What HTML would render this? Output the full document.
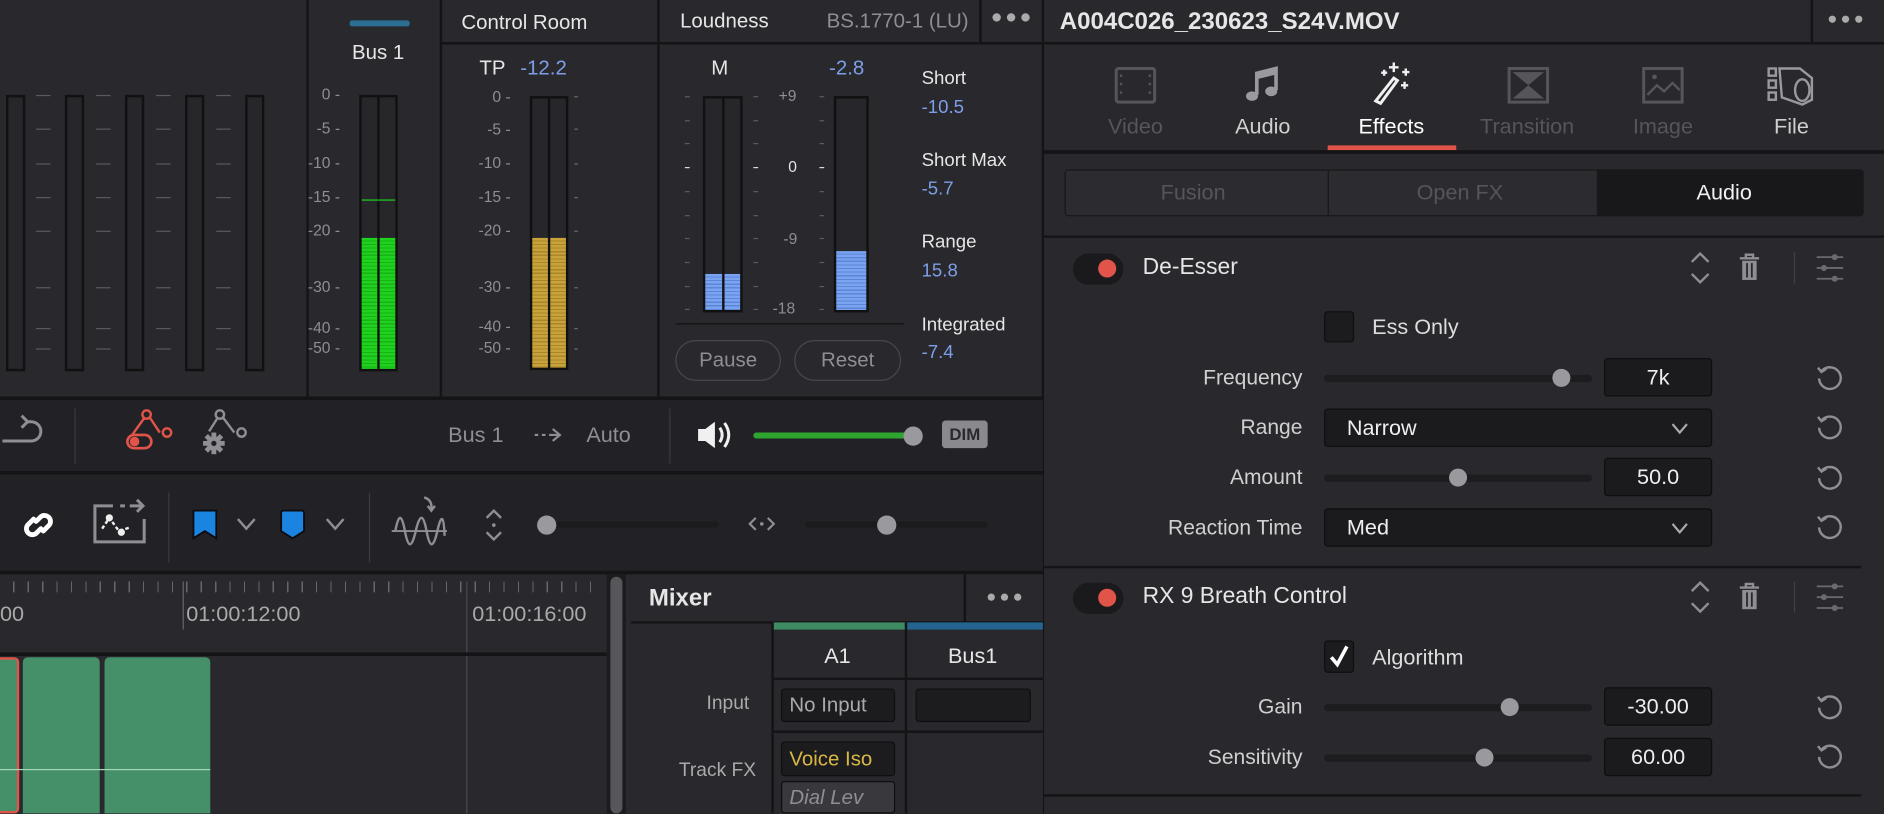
<!DOCTYPE html>
<html><head><meta charset="utf-8">
<style>
*{margin:0;padding:0;box-sizing:border-box}
html,body{width:1884px;height:814px;overflow:hidden;background:#28282d}
#w{position:absolute;left:0;top:0;width:1568px;height:677px;transform:scale(1.20153);transform-origin:0 0;background:#28282d;font-family:"Liberation Sans",sans-serif;color:#e6e6e6}
.a{position:absolute}
.t{position:absolute;white-space:nowrap;line-height:1}
.hl{position:absolute;background:#141416;height:2px}
.vl{position:absolute;background:#141416;width:2px}
.g{color:#8e8e93}
.b{color:#7d9fe8}
.m{position:absolute;border:2px solid #111;background:#26262b}
.dash{position:absolute;height:1px;background:#5a5a60;width:12px}
.sc{position:absolute;font-size:13px;color:#8e8e93;text-align:right;width:40px;line-height:1}
.lab{position:absolute;right:484px;font-size:17.5px;color:#d0d0d0;line-height:1;white-space:nowrap}
.trk{position:absolute;left:1102px;width:223px;height:6px;background:#1d1d20;border-radius:3px}
.knob{position:absolute;width:15px;height:15px;border-radius:50%;background:#9a9a9e}
.box{position:absolute;left:1335px;width:90px;height:32px;background:#1b1b1e;border:1px solid #0e0e10;border-radius:3px;font-size:18px;text-align:center;line-height:30px;color:#eee}
.dd{position:absolute;left:1102px;width:323px;height:32px;background:#1b1b1e;border:1px solid #0e0e10;border-radius:3px;font-size:18px;line-height:30px;padding-left:18px;color:#eee}
.rs{position:absolute;left:1510px}
.tab{position:absolute;top:96px;font-size:18px;text-align:center;width:100px;line-height:1}
.dots{position:absolute;width:34px;height:8px}
.dots i{position:absolute;top:0;width:7px;height:7px;border-radius:50%;background:#aaa}
</style></head><body><div id="w">

<div class="m" style="left:5px;top:79px;width:16px;height:230px"></div>
<div class="m" style="left:54px;top:79px;width:16px;height:230px"></div>
<div class="m" style="left:104px;top:79px;width:16px;height:230px"></div>
<div class="m" style="left:154px;top:79px;width:16px;height:230px"></div>
<div class="m" style="left:204px;top:79px;width:16px;height:230px"></div>
<div id="dashes"></div>

<div class="vl" style="left:255px;top:0;height:331px"></div>
<div class="vl" style="left:366px;top:0;height:331px"></div>
<div class="vl" style="left:547px;top:0;height:331px"></div>
<div class="vl" style="left:867px;top:0;height:677px"></div>

<!-- Bus 1 -->
<div class="a" style="left:291px;top:17px;width:50px;height:5px;border-radius:2px;background:#2b6e92"></div>
<div class="t" style="left:293px;top:35px;font-size:17px">Bus 1</div>
<div class="sc" style="left:243px;top:72px">0 -</div>
<div class="sc" style="left:243px;top:100px">-5 -</div>
<div class="sc" style="left:243px;top:129px">-10 -</div>
<div class="sc" style="left:243px;top:157px">-15 -</div>
<div class="sc" style="left:243px;top:185px">-20 -</div>
<div class="sc" style="left:243px;top:232px">-30 -</div>
<div class="sc" style="left:243px;top:266px">-40 -</div>
<div class="sc" style="left:243px;top:283px">-50 -</div>
<div class="m" style="left:299px;top:79px;width:17px;height:230px"></div>
<div class="m" style="left:314px;top:79px;width:17px;height:230px"></div>
<div class="a" style="left:301px;top:198px;width:13px;height:109px;background:repeating-linear-gradient(#1ed21e 0 2px,#17b317 2px 3px)"></div>
<div class="a" style="left:316px;top:198px;width:13px;height:109px;background:repeating-linear-gradient(#1ed21e 0 2px,#17b317 2px 3px)"></div>
<div class="a" style="left:301px;top:166px;width:28px;height:1px;background:#1ed21e"></div>

<!-- Control Room -->
<div class="t" style="left:384px;top:10px;font-size:17px">Control Room</div>
<div class="hl" style="left:367px;top:35px;width:181px"></div>
<div class="t" style="left:399px;top:48px;font-size:17px">TP</div>
<div class="t b" style="left:433px;top:48px;font-size:17px">-12.2</div>
<div class="sc" style="left:385px;top:74px">0 -</div>
<div class="sc" style="left:385px;top:101px">-5 -</div>
<div class="sc" style="left:385px;top:129px">-10 -</div>
<div class="sc" style="left:385px;top:157px">-15 -</div>
<div class="sc" style="left:385px;top:185px">-20 -</div>
<div class="sc" style="left:385px;top:232px">-30 -</div>
<div class="sc" style="left:385px;top:265px">-40 -</div>
<div class="sc" style="left:385px;top:283px">-50 -</div>
<div id="crd"></div>
<div class="m" style="left:441px;top:80px;width:17px;height:228px"></div>
<div class="m" style="left:456px;top:80px;width:17px;height:228px"></div>
<div class="a" style="left:443px;top:198px;width:13px;height:108px;background:repeating-linear-gradient(#c9a23a 0 2px,#a8862c 2px 3px)"></div>
<div class="a" style="left:458px;top:198px;width:13px;height:108px;background:repeating-linear-gradient(#c9a23a 0 2px,#a8862c 2px 3px)"></div>

<!-- Loudness -->
<div class="t" style="left:566px;top:9px;font-size:17px">Loudness</div>
<div class="t g" style="left:688px;top:9px;font-size:17px">BS.1770-1 (LU)</div>
<div class="vl" style="left:815px;top:0;height:36px"></div>
<div class="dots" style="left:826px;top:11px"><i style="left:0"></i><i style="left:12px"></i><i style="left:24px"></i></div>
<div class="hl" style="left:548px;top:35px;width:320px"></div>
<div class="t" style="left:592px;top:48px;font-size:17px">M</div>
<div class="t b" style="left:690px;top:48px;font-size:17px">-2.8</div>
<div id="ld"></div>
<div class="t g" style="left:648px;top:73px;font-size:13px">+9</div>
<div class="t" style="left:656px;top:132px;font-size:13px">0</div>
<div class="t g" style="left:652px;top:192px;font-size:13px">-9</div>
<div class="t g" style="left:643px;top:250px;font-size:13px">-18</div>
<div class="m" style="left:585px;top:80px;width:18px;height:180px"></div>
<div class="m" style="left:601px;top:80px;width:17px;height:180px"></div>
<div class="a" style="left:587px;top:228px;width:14px;height:30px;background:repeating-linear-gradient(#7aa3f2 0 2px,#5d86d6 2px 3px)"></div>
<div class="a" style="left:603px;top:228px;width:13px;height:30px;background:repeating-linear-gradient(#7aa3f2 0 2px,#5d86d6 2px 3px)"></div>
<div class="m" style="left:694px;top:80px;width:29px;height:180px"></div>
<div class="a" style="left:696px;top:209px;width:25px;height:49px;background:repeating-linear-gradient(#7aa3f2 0 2px,#5d86d6 2px 3px)"></div>
<div class="a" style="left:563px;top:269px;width:189px;height:1px;background:#111"></div>
<div class="a" style="left:562px;top:283px;width:88px;height:34px;border:1px solid #47474c;border-radius:17px;color:#8e8e93;font-size:17px;text-align:center;line-height:32px">Pause</div>
<div class="a" style="left:661px;top:283px;width:89px;height:34px;border:1px solid #47474c;border-radius:17px;color:#8e8e93;font-size:17px;text-align:center;line-height:32px">Reset</div>
<div class="t" style="left:767px;top:58px;font-size:15.5px">Short</div>
<div class="t b" style="left:767px;top:82px;font-size:15.5px">-10.5</div>
<div class="t" style="left:767px;top:126px;font-size:15.5px">Short Max</div>
<div class="t b" style="left:767px;top:150px;font-size:15.5px">-5.7</div>
<div class="t" style="left:767px;top:194px;font-size:15.5px">Range</div>
<div class="t b" style="left:767px;top:218px;font-size:15.5px">15.8</div>
<div class="t" style="left:767px;top:263px;font-size:15.5px">Integrated</div>
<div class="t b" style="left:767px;top:286px;font-size:15.5px">-7.4</div>

<!-- toolbar 1 -->
<div class="hl" style="left:0;top:330px;width:868px;height:3px"></div>
<div class="a" style="left:0;top:333px;width:868px;height:59px;background:#222226"></div>
<svg class="a" style="left:0;top:343px" width="40" height="36" viewBox="0 0 40 36"><path d="M22 8 H26 A8 8 0 0 1 26 24 H2" fill="none" stroke="#8e8e93" stroke-width="2.5"/><path d="M18 3 L23 8 L18 13" fill="none" stroke="#8e8e93" stroke-width="2.5"/></svg>
<div class="a" style="left:62px;top:340px;width:1px;height:46px;background:#3a3a3f"></div>
<svg class="a" style="left:100px;top:340px" width="55" height="40" viewBox="0 0 55 40"><circle cx="22" cy="5" r="3.5" fill="none" stroke="#e0544a" stroke-width="2"/><path d="M20 8 L10 22 M25 8 L33 20" stroke="#e0544a" stroke-width="2"/><circle cx="39" cy="20" r="3.5" fill="none" stroke="#e0544a" stroke-width="2"/><rect x="6" y="22" width="20" height="11" rx="5.5" fill="none" stroke="#e0544a" stroke-width="2.2"/><circle cx="12" cy="27.5" r="4" fill="#e0544a"/></svg>
<svg class="a" style="left:165px;top:340px" width="50" height="42" viewBox="0 0 50 42"><circle cx="18" cy="5" r="3.5" fill="none" stroke="#8e8e93" stroke-width="2"/><path d="M16 8 L9 19 M21 8 L30 20" stroke="#8e8e93" stroke-width="2"/><circle cx="36" cy="20" r="3.5" fill="none" stroke="#8e8e93" stroke-width="2"/><g fill="#8e8e93"><circle cx="13" cy="29" r="6"/><rect x="11" y="20" width="4" height="18"/><rect x="4" y="27" width="18" height="4"/><rect x="11" y="20" width="4" height="18" transform="rotate(45 13 29)"/><rect x="11" y="20" width="4" height="18" transform="rotate(-45 13 29)"/></g><circle cx="13" cy="29" r="2.2" fill="#222226"/></svg>
<div class="t g" style="left:373px;top:353px;font-size:18px">Bus 1</div>
<svg class="a" style="left:443px;top:354px" width="26" height="16" viewBox="0 0 26 16"><path d="M2 8h3M8 8h3M14 8h9M17 3l6 5-6 5" fill="none" stroke="#8e8e93" stroke-width="1.8"/></svg>
<div class="t g" style="left:488px;top:353px;font-size:18px">Auto</div>
<div class="a" style="left:557px;top:340px;width:1px;height:46px;background:#3a3a3f"></div>
<svg class="a" style="left:578px;top:348px" width="34" height="28" viewBox="0 0 34 28"><path d="M3 9 H9 L17 3 V25 L9 19 H3Z" fill="#f0f0f0"/><path d="M21 8 Q25 14 21 20" fill="none" stroke="#f0f0f0" stroke-width="2.5"/><path d="M25 4 Q32 14 25 24" fill="none" stroke="#f0f0f0" stroke-width="2.5"/></svg>
<div class="a" style="left:627px;top:360px;width:133px;height:5px;border-radius:3px;background:#2fa52f"></div>
<div class="knob" style="left:752px;top:355px;width:16px;height:16px"></div>
<div class="a" style="left:784px;top:350px;width:38px;height:23px;background:#8a8a8e;border-radius:3px;color:#2a2a2e;font-size:14px;font-weight:bold;text-align:center;line-height:23px">DIM</div>

<!-- toolbar 2 -->
<div class="hl" style="left:0;top:392px;width:868px;height:3px"></div>
<div class="a" style="left:0;top:395px;width:868px;height:80px;background:#222226"></div>
<svg class="a" style="left:14px;top:420px" width="36" height="34" viewBox="0 0 36 34"><path d="M14 12 L9 17 A5 5 0 0 0 16 24 L20 20" fill="none" stroke="#fff" stroke-width="4" stroke-linecap="round"/><path d="M22 22 L27 17 A5 5 0 0 0 20 10 L16 14" fill="none" stroke="#fff" stroke-width="4" stroke-linecap="round"/></svg>
<svg class="a" style="left:74px;top:412px" width="50" height="42" viewBox="0 0 50 42"><path d="M20 9 H5 V39 H46 V20" fill="none" stroke="#8e8e93" stroke-width="2.5"/><path d="M26 9 H30 M34 9 H44 M40 4 L45 9 L40 14" fill="none" stroke="#8e8e93" stroke-width="2.5"/><path d="M11 28 L17 19 L25 30 L34 27" fill="none" stroke="#eee" stroke-width="2" stroke-dasharray="3 2"/><circle cx="17" cy="19" r="3" fill="#eee"/><circle cx="27" cy="31" r="3" fill="#eee"/></svg>
<div class="a" style="left:140px;top:410px;width:1px;height:58px;background:#3a3a3f"></div>
<svg class="a" style="left:160px;top:424px" width="22" height="26" viewBox="0 0 22 26"><path d="M1 1 H20 V24 L10.5 18 L1 24Z" fill="#1a84e0" stroke="#0b0b10" stroke-width="1.5"/></svg>
<svg class="a" style="left:196px;top:430px" width="18" height="12" viewBox="0 0 18 12"><path d="M2 2 L9 10 L16 2" fill="none" stroke="#8e8e93" stroke-width="2"/></svg>
<svg class="a" style="left:233px;top:424px" width="22" height="26" viewBox="0 0 22 26"><path d="M1 3 Q1 1 3 1 H18 Q20 1 20 3 V18 L10.5 24 L1 18Z" fill="#1a84e0" stroke="#0b0b10" stroke-width="1.5"/></svg>
<svg class="a" style="left:270px;top:430px" width="18" height="12" viewBox="0 0 18 12"><path d="M2 2 L9 10 L16 2" fill="none" stroke="#8e8e93" stroke-width="2"/></svg>
<div class="a" style="left:307px;top:410px;width:1px;height:58px;background:#3a3a3f"></div>
<svg class="a" style="left:324px;top:410px" width="50" height="46" viewBox="0 0 50 46"><path d="M2 32 H48" stroke="#8e8e93" stroke-width="1.5"/><path d="M5 32 Q9 10 13 32 T22 32 T31 32 T40 32 T46 36" fill="none" stroke="#8e8e93" stroke-width="2"/><path d="M29 4 Q36 6 35 14 M32 11 L35 15 L38 11" fill="none" stroke="#8e8e93" stroke-width="2"/></svg>
<svg class="a" style="left:402px;top:422px" width="18" height="30" viewBox="0 0 18 30"><path d="M3 9 L9 3 L15 9 M3 21 L9 27 L15 21" fill="none" stroke="#8e8e93" stroke-width="2"/><circle cx="9" cy="15" r="1.5" fill="#8e8e93"/></svg>
<div class="a" style="left:455px;top:434px;width:143px;height:5px;border-radius:3px;background:#1b1b1e"></div>
<div class="knob" style="left:447px;top:429px;width:16px;height:16px"></div>
<svg class="a" style="left:622px;top:428px" width="24" height="16" viewBox="0 0 24 16"><path d="M7 3 L2 8 L7 13 M17 3 L22 8 L17 13" fill="none" stroke="#8e8e93" stroke-width="1.8"/><circle cx="12" cy="8" r="1.5" fill="#8e8e93"/></svg>
<div class="a" style="left:670px;top:434px;width:152px;height:5px;border-radius:3px;background:#1b1b1e"></div>
<div class="knob" style="left:730px;top:429px;width:16px;height:16px"></div>

<!-- timeline -->
<div class="hl" style="left:0;top:475px;width:868px;height:3px"></div>
<div class="a" style="left:0;top:484px;width:502px;height:9px;background:repeating-linear-gradient(90deg,transparent 0 11px,#66666b 11px 12px)"></div>
<div class="a" style="left:152px;top:484px;width:1px;height:40px;background:#66666b"></div>
<div class="a" style="left:388px;top:484px;width:1px;height:193px;background:#4a4a50"></div>
<div class="t g" style="left:0;top:502px;font-size:18px;color:#aaa">00</div>
<div class="t g" style="left:155px;top:502px;font-size:18px;color:#aaa">01:00:12:00</div>
<div class="t g" style="left:393px;top:502px;font-size:18px;color:#aaa">01:00:16:00</div>
<div class="hl" style="left:0;top:543px;width:505px;height:3px"></div>
<div class="a" style="left:-4px;top:547px;width:20px;height:130px;background:#459068;border:2px solid #e0544a;border-radius:4px"></div>
<div class="a" style="left:19px;top:547px;width:64px;height:130px;background:#459068;border-radius:4px 4px 0 0"></div>
<div class="a" style="left:87px;top:547px;width:88px;height:130px;background:#459068;border-radius:4px 4px 0 0"></div>
<div class="a" style="left:0;top:640px;width:175px;height:1px;background:#a6d8b8"></div>
<div class="a" style="left:505px;top:478px;width:16px;height:199px;background:#1c1c1f"></div>
<div class="a" style="left:508px;top:480px;width:10px;height:197px;background:#56565b;border-radius:5px"></div>

<!-- mixer -->
<div class="a" style="left:525px;top:478px;width:343px;height:199px;background:#28282d"></div>
<div class="t" style="left:540px;top:488px;font-size:20px;font-weight:bold">Mixer</div>
<div class="vl" style="left:802px;top:478px;height:40px"></div>
<div class="dots" style="left:822px;top:494px"><i style="left:0;width:6px;height:6px"></i><i style="left:11px;width:6px;height:6px"></i><i style="left:22px;width:6px;height:6px"></i></div>
<div class="hl" style="left:525px;top:517px;width:343px"></div>
<div class="a" style="left:643px;top:518px;width:111px;height:6px;background:#3e8a62"></div>
<div class="a" style="left:755px;top:518px;width:113px;height:6px;background:#23658f"></div>
<div class="vl" style="left:642px;top:518px;height:159px"></div>
<div class="vl" style="left:753px;top:518px;height:159px"></div>
<div class="t" style="left:686px;top:537px;font-size:18px">A1</div>
<div class="t" style="left:789px;top:537px;font-size:18px">Bus1</div>
<div class="hl" style="left:643px;top:564px;width:225px"></div>
<div class="t g" style="left:588px;top:578px;font-size:16px;color:#aaa">Input</div>
<div class="a" style="left:650px;top:573px;width:95px;height:28px;background:#1c1c1f;border:1px solid #0f0f11;border-radius:3px;color:#aaa;font-size:17px;line-height:26px;padding-left:6px">No Input</div>
<div class="a" style="left:762px;top:573px;width:96px;height:28px;background:#1c1c1f;border:1px solid #0f0f11;border-radius:3px"></div>
<div class="hl" style="left:643px;top:608px;width:225px"></div>
<div class="t g" style="left:565px;top:634px;font-size:16px;color:#aaa">Track FX</div>
<div class="a" style="left:650px;top:617px;width:95px;height:29px;background:#1c1c1f;border:1px solid #0f0f11;border-radius:3px;color:#d8b842;font-size:17px;line-height:27px;padding-left:6px">Voice Iso</div>
<div class="a" style="left:650px;top:650px;width:95px;height:27px;background:#38383d;border:1px solid #0f0f11;border-radius:3px;color:#8e8e93;font-size:17px;line-height:25px;padding-left:6px;font-style:italic">Dial Lev</div>

<!-- right inspector -->
<div class="a" style="left:869px;top:0;width:699px;height:677px;background:#28282d"></div>
<div class="t" style="left:882px;top:8px;font-size:20px;font-weight:bold">A004C026_230623_S24V.MOV</div>
<div class="vl" style="left:1507px;top:0;height:36px"></div>
<div class="dots" style="left:1522px;top:13px"><i style="left:0;width:6px;height:6px"></i><i style="left:11px;width:6px;height:6px"></i><i style="left:22px;width:6px;height:6px"></i></div>
<div class="hl" style="left:869px;top:35px;width:699px"></div>
<svg class="a" style="left:927px;top:55px" width="36" height="32" viewBox="0 0 36 32"><rect x="2" y="2" width="32" height="28" rx="2" fill="none" stroke="#55555a" stroke-width="2.5"/><path d="M6 7v2M6 14v2M6 21v2M30 7v2M30 14v2M30 21v2" stroke="#55555a" stroke-width="2"/></svg>
<svg class="a" style="left:1034px;top:55px" width="34" height="32" viewBox="0 0 34 32"><path d="M12 24 V6 L28 2 V20" fill="none" stroke="#9a9a9e" stroke-width="3"/><path d="M12 6 L28 2 V7 L12 11Z" fill="#9a9a9e"/><ellipse cx="8" cy="25" rx="5" ry="4" fill="#9a9a9e"/><ellipse cx="24" cy="21" rx="5" ry="4" fill="#9a9a9e"/></svg>
<svg class="a" style="left:1140px;top:50px" width="38" height="38" viewBox="0 0 38 38"><path d="M5 34 L20 15 L23 17 L9 36Z" fill="none" stroke="#f0f0f0" stroke-width="2.5"/><path d="M20 2v8M16 6h8M12 8v5M9.5 10.5h5M30 7v6M27 10h6M29 18v6M26 21h6" stroke="#f0f0f0" stroke-width="2"/></svg>
<svg class="a" style="left:1254px;top:55px" width="36" height="32" viewBox="0 0 36 32"><rect x="2" y="2" width="32" height="28" fill="none" stroke="#55555a" stroke-width="2.5"/><path d="M5 5 H31 L18 16Z M5 27 H31 L18 16Z" fill="#55555a"/></svg>
<svg class="a" style="left:1366px;top:55px" width="36" height="32" viewBox="0 0 36 32"><rect x="2" y="2" width="32" height="28" fill="none" stroke="#55555a" stroke-width="2.5"/><path d="M5 24 L13 16 L19 21 L26 14 L32 20" fill="none" stroke="#55555a" stroke-width="2"/><circle cx="11" cy="9" r="2" fill="#55555a"/></svg>
<svg class="a" style="left:1470px;top:53px" width="42" height="36" viewBox="0 0 42 36"><rect x="2" y="4" width="6" height="6" fill="none" stroke="#9a9a9e" stroke-width="2"/><rect x="2" y="14" width="6" height="6" fill="none" stroke="#9a9a9e" stroke-width="2"/><rect x="2" y="24" width="6" height="6" fill="none" stroke="#9a9a9e" stroke-width="2"/><path d="M11 4 H28 L38 12 V30 L30 34 L13 28Z" fill="none" stroke="#9a9a9e" stroke-width="2"/><ellipse cx="30" cy="22" rx="6" ry="9" fill="none" stroke="#9a9a9e" stroke-width="2"/></svg>
<div class="tab" style="left:895px;color:#55555a">Video</div>
<div class="tab" style="left:1001px;color:#cfcfcf">Audio</div>
<div class="tab" style="left:1108px;color:#fff">Effects</div>
<div class="tab" style="left:1221px;color:#55555a">Transition</div>
<div class="tab" style="left:1334px;color:#55555a">Image</div>
<div class="tab" style="left:1441px;color:#cfcfcf">File</div>
<div class="a" style="left:1105px;top:121px;width:107px;height:4px;background:#e0544a"></div>
<div class="hl" style="left:869px;top:125px;width:699px;height:3px"></div>
<div class="a" style="left:886px;top:141px;width:665px;height:39px;border:1px solid #18181b;border-radius:3px;background:#2b2b30"></div>
<div class="a" style="left:1105px;top:142px;width:1px;height:37px;background:#18181b"></div>
<div class="a" style="left:1329px;top:141px;width:222px;height:39px;background:#18181b;border-radius:0 3px 3px 0"></div>
<div class="t" style="left:966px;top:151px;font-size:18px;color:#55555a">Fusion</div>
<div class="t" style="left:1179px;top:151px;font-size:18px;color:#55555a">Open FX</div>
<div class="t" style="left:1412px;top:151px;font-size:18px;color:#f0f0f0">Audio</div>
<div class="hl" style="left:869px;top:196px;width:699px"></div>

<!-- De-Esser -->
<div class="a" style="left:893px;top:211px;width:42px;height:26px;border-radius:13px;background:#1a1a1d"></div>
<div class="a" style="left:914px;top:216px;width:15px;height:15px;border-radius:50%;background:#e0544a"></div>
<div class="t" style="left:951px;top:213px;font-size:19px">De-Esser</div>
<svg class="a" style="left:1405px;top:208px" width="20" height="30" viewBox="0 0 20 30"><path d="M3 10 L10 3 L17 10 M3 20 L10 27 L17 20" fill="none" stroke="#8e8e93" stroke-width="2"/></svg>
<svg class="a" style="left:1447px;top:210px" width="18" height="24" viewBox="0 0 18 24"><path d="M1 5H17M6 5V2H12V5" stroke="#8e8e93" stroke-width="2" fill="none"/><rect x="3" y="7" width="12" height="16" fill="#8e8e93"/><path d="M7 9V21M11 9V21" stroke="#28282d" stroke-width="1.5"/></svg>
<div class="a" style="left:1493px;top:210px;width:1px;height:26px;background:#404045"></div>
<svg class="a" style="left:1510px;top:211px" width="26" height="24" viewBox="0 0 26 24"><path d="M2 3H24M2 12H24M2 21H24" stroke="#6a6a6f" stroke-width="1.5"/><circle cx="17" cy="3" r="2.5" fill="#6a6a6f"/><circle cx="8" cy="12" r="2.5" fill="#6a6a6f"/><circle cx="17" cy="21" r="2.5" fill="#6a6a6f"/></svg>
<div class="a" style="left:1102px;top:259px;width:25px;height:26px;border:1px solid #0e0e10;border-radius:3px;background:#1c1c1f"></div>
<div class="t" style="left:1142px;top:263px;font-size:18px;color:#ddd">Ess Only</div>

<div class="lab" style="top:306px">Frequency</div>
<div class="trk" style="top:312px"></div><div class="knob" style="left:1292px;top:307px"></div>
<div class="box" style="top:298px">7k</div>

<div class="lab" style="top:347px">Range</div>
<div class="dd" style="top:340px">Narrow</div>
<svg class="a" style="left:1390px;top:351px" width="16" height="12" viewBox="0 0 16 12"><path d="M2 2 L8 9 L14 2" fill="none" stroke="#aaa" stroke-width="1.8"/></svg>

<div class="lab" style="top:389px">Amount</div>
<div class="trk" style="top:395px"></div><div class="knob" style="left:1206px;top:390px"></div>
<div class="box" style="top:381px">50.0</div>

<div class="lab" style="top:431px">Reaction Time</div>
<div class="dd" style="top:423px">Med</div>
<svg class="a" style="left:1390px;top:434px" width="16" height="12" viewBox="0 0 16 12"><path d="M2 2 L8 9 L14 2" fill="none" stroke="#aaa" stroke-width="1.8"/></svg>

<div class="hl" style="left:869px;top:471px;width:680px"></div>

<!-- RX9 -->
<div class="a" style="left:893px;top:485px;width:42px;height:26px;border-radius:13px;background:#1a1a1d"></div>
<div class="a" style="left:914px;top:490px;width:15px;height:15px;border-radius:50%;background:#e0544a"></div>
<div class="t" style="left:951px;top:487px;font-size:19px">RX 9 Breath Control</div>
<svg class="a" style="left:1405px;top:482px" width="20" height="30" viewBox="0 0 20 30"><path d="M3 10 L10 3 L17 10 M3 20 L10 27 L17 20" fill="none" stroke="#8e8e93" stroke-width="2"/></svg>
<svg class="a" style="left:1447px;top:484px" width="18" height="24" viewBox="0 0 18 24"><path d="M1 5H17M6 5V2H12V5" stroke="#8e8e93" stroke-width="2" fill="none"/><rect x="3" y="7" width="12" height="16" fill="#8e8e93"/><path d="M7 9V21M11 9V21" stroke="#28282d" stroke-width="1.5"/></svg>
<div class="a" style="left:1493px;top:484px;width:1px;height:26px;background:#404045"></div>
<svg class="a" style="left:1510px;top:485px" width="26" height="24" viewBox="0 0 26 24"><path d="M2 3H24M2 12H24M2 21H24" stroke="#6a6a6f" stroke-width="1.5"/><circle cx="17" cy="3" r="2.5" fill="#6a6a6f"/><circle cx="8" cy="12" r="2.5" fill="#6a6a6f"/><circle cx="17" cy="21" r="2.5" fill="#6a6a6f"/></svg>
<div class="a" style="left:1102px;top:533px;width:25px;height:27px;border:1px solid #0e0e10;border-radius:3px;background:#1c1c1f"></div>
<svg class="a" style="left:1105px;top:536px" width="20" height="20" viewBox="0 0 20 20"><path d="M3 11 L8 17 L16 2" fill="none" stroke="#fff" stroke-width="3"/></svg>
<div class="t" style="left:1142px;top:538px;font-size:18px;color:#ddd">Algorithm</div>

<div class="lab" style="top:580px">Gain</div>
<div class="trk" style="top:586px"></div><div class="knob" style="left:1249px;top:581px"></div>
<div class="box" style="top:572px">-30.00</div>

<div class="lab" style="top:622px">Sensitivity</div>
<div class="trk" style="top:628px"></div><div class="knob" style="left:1228px;top:623px"></div>
<div class="box" style="top:614px">60.00</div>

<div class="hl" style="left:869px;top:661px;width:680px"></div>

<svg class="rs" style="top:302px" width="26" height="26" viewBox="0 0 26 26"><path d="M6 7 A9 9 0 1 1 4 13" fill="none" stroke="#8e8e93" stroke-width="2"/><path d="M3 4 L6 7.5 L10 5" fill="none" stroke="#8e8e93" stroke-width="2"/></svg>
<svg class="rs" style="top:343px" width="26" height="26" viewBox="0 0 26 26"><path d="M6 7 A9 9 0 1 1 4 13" fill="none" stroke="#8e8e93" stroke-width="2"/><path d="M3 4 L6 7.5 L10 5" fill="none" stroke="#8e8e93" stroke-width="2"/></svg>
<svg class="rs" style="top:385px" width="26" height="26" viewBox="0 0 26 26"><path d="M6 7 A9 9 0 1 1 4 13" fill="none" stroke="#8e8e93" stroke-width="2"/><path d="M3 4 L6 7.5 L10 5" fill="none" stroke="#8e8e93" stroke-width="2"/></svg>
<svg class="rs" style="top:426px" width="26" height="26" viewBox="0 0 26 26"><path d="M6 7 A9 9 0 1 1 4 13" fill="none" stroke="#8e8e93" stroke-width="2"/><path d="M3 4 L6 7.5 L10 5" fill="none" stroke="#8e8e93" stroke-width="2"/></svg>
<svg class="rs" style="top:576px" width="26" height="26" viewBox="0 0 26 26"><path d="M6 7 A9 9 0 1 1 4 13" fill="none" stroke="#8e8e93" stroke-width="2"/><path d="M3 4 L6 7.5 L10 5" fill="none" stroke="#8e8e93" stroke-width="2"/></svg>
<svg class="rs" style="top:617px" width="26" height="26" viewBox="0 0 26 26"><path d="M6 7 A9 9 0 1 1 4 13" fill="none" stroke="#8e8e93" stroke-width="2"/><path d="M3 4 L6 7.5 L10 5" fill="none" stroke="#8e8e93" stroke-width="2"/></svg>

</div>
<script>
(function(){
 var h='';var ys=[79,107,136,164,192,239,273,290];
 [30,80,130,180].forEach(function(x){ys.forEach(function(y){h+='<div class="dash" style="left:'+x+'px;top:'+y+'px"></div>';});});
 document.getElementById('dashes').innerHTML=h;
 var c='';[80,107,136,164,192,239,273,290].forEach(function(y){c+='<div class="a" style="left:478px;top:'+y+'px;width:3px;height:1px;background:#6a6a6f"></div>';});
 document.getElementById('crd').innerHTML=c;
 var l='';for(var i=0;i<10;i++){var y=80+i*19.7;[570,627,682].forEach(function(x){l+='<div class="a" style="left:'+x+'px;top:'+y+'px;width:4px;height:1px;background:'+(i==3?'#ddd':'#5a5a60')+'"></div>';});}
 document.getElementById('ld').innerHTML=l;
})();
</script>
</body></html>
